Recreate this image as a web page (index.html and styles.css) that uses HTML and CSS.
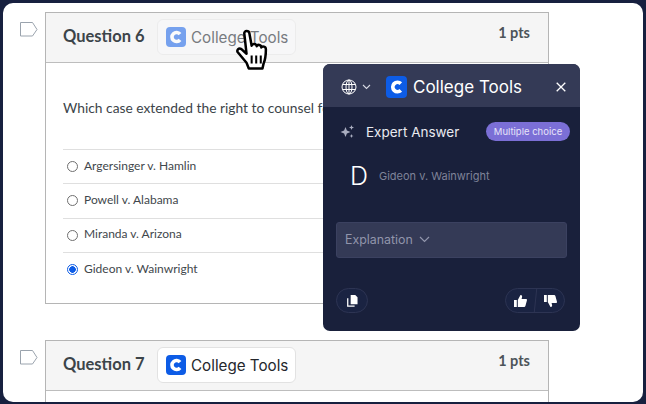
FILE: index.html
```html
<!DOCTYPE html>
<html lang="en">
<head>
<meta charset="utf-8">
<title>College Tools</title>
<link rel="stylesheet" href="styles.css">
</head>
<body>
<div class="window">
  <div class="question">
    <svg class="flag" width="18" height="15" viewBox="0 0 18 15"><path d="M.5.5h12l4.500 7-4.500 6.500H.5z" fill="#fff" stroke="#9aa3ad"/></svg>
    <section class="card card-open">
      <header class="card-head">
        <h2 class="q-title">Question 6</h2>
        <div class="tool-btn tool-btn-faded">
          <svg class="logo-sm" width="20" height="20" viewBox="0 0 20 20"><rect width="20" height="20" rx="4" fill="#0d5ce6"/><path d="M14 7.200A4.500 4.500 0 1 0 14 12.800" fill="none" stroke="#fff" stroke-width="3.600"/></svg>
          <span>College Tools</span>
        </div>
        <span class="pts">1 pts</span>
      </header>
      <div class="card-body">
        <p class="q-text">Which case extended the right to counsel for felony defendants in state courts?</p>
        <ul class="answers">
          <li class="answer"><span class="radio"></span>Argersinger v. Hamlin</li>
          <li class="answer"><span class="radio"></span>Powell v. Alabama</li>
          <li class="answer"><span class="radio"></span>Miranda v. Arizona</li>
          <li class="answer"><span class="radio radio-on"></span>Gideon v. Wainwright</li>
        </ul>
      </div>
    </section>
  </div>
  <div class="question">
    <svg class="flag" width="18" height="15" viewBox="0 0 18 15"><path d="M.5.5h12l4.500 7-4.500 6.500H.5z" fill="#fff" stroke="#9aa3ad"/></svg>
    <section class="card card-cut">
      <header class="card-head">
        <h2 class="q-title">Question 7</h2>
        <div class="tool-btn">
          <svg class="logo-sm" width="20" height="20" viewBox="0 0 20 20"><rect width="20" height="20" rx="4" fill="#0d5ce6"/><path d="M14 7.200A4.500 4.500 0 1 0 14 12.800" fill="none" stroke="#fff" stroke-width="3.600"/></svg>
          <span>College Tools</span>
        </div>
        <span class="pts">1 pts</span>
      </header>
    </section>
  </div>

  <svg class="cursor" width="41" height="48" viewBox="0 0 36 42">
    <path d="M9 4.500c0-2.500 4-2.500 4.500 0l2 11c.5-2 4-2 4.500.5.500-2 4-1.500 4 1 .8-1.500 4-1 4 1.500 0 5-.5 9-2 12.500l-1 4.500H13l-2-5-7.500-9c-1.500-2 .5-4.500 3-3l4.500 4z" fill="#fff" stroke="#000" stroke-width="2.200" stroke-linejoin="round"/>
    <path d="M15.500 24v7M19.500 24v7M23.500 24v7" stroke="#000" stroke-width="1.800"/>
  </svg>

  <aside class="popup">
    <div class="pop-head">
      <svg class="globe" width="16" height="16" viewBox="0 0 16 16" fill="none" stroke="#fff" stroke-width="1"><circle cx="8" cy="8" r="7"/><ellipse cx="8" cy="8" rx="3" ry="7"/><path d="M1.500 5.500h13M1.500 10.500h13M8 1v14"/></svg>
      <svg class="chev-sm" width="9" height="6" viewBox="0 0 9 6" fill="none" stroke="#d5d7e2" stroke-width="1.100"><path d="M1 1l3.500 3.500L8 1"/></svg>
      <svg class="logo-lg" width="21" height="22" viewBox="0 0 21 22"><rect width="21" height="22" rx="4" fill="#0d5ce6"/><path d="M14.800 7.600A4.700 4.700 0 1 0 14.800 14.400" fill="none" stroke="#fff" stroke-width="3.800"/></svg>
      <span class="pop-title">College Tools</span>
      <svg class="close" width="10" height="10" viewBox="0 0 10 10" stroke="#fff" stroke-width="1.300"><path d="M.7.700l8.600 8.600M9.300.700L.7 9.300"/></svg>
    </div>
    <div class="pop-body">
      <div class="expert-row">
        <svg class="spark" width="15" height="15" viewBox="0 0 15 15" fill="#a9adc0"><path d="M5.500 3l1.400 3.600L10.500 8 6.900 9.400 5.500 13 4.100 9.400.5 8l3.600-1.400zM11.500 1l.7 1.800 1.800.7-1.800.7-.7 1.800-.7-1.800-1.800-.7 1.800-.7zM11.500 10l.6 1.400 1.400.6-1.400.6-.6 1.400-.6-1.400-1.400-.6 1.400-.6z"/></svg>
        <span class="expert">Expert Answer</span>
        <span class="pill">Multiple choice</span>
      </div>
      <div class="result">
        <span class="letter">D</span>
        <span class="result-text">Gideon v. Wainwright</span>
      </div>
      <div class="explain">
        <span>Explanation</span>
        <svg width="11" height="7" viewBox="0 0 11 7" fill="none" stroke="#9195ab" stroke-width="1.200"><path d="M1 1l4.500 4.500L10 1"/></svg>
      </div>
      <div class="pop-foot">
        <div class="round-btn">
          <svg width="11" height="12" viewBox="0 0 12 13"><path d="M4 0h5l2.500 2.500V10H4z" fill="#fff"/><path d="M.8 3.500v8.700h7.500" fill="none" stroke="#fff" stroke-width="1.400"/></svg>
        </div>
        <div class="vote">
          <svg width="13" height="12" viewBox="0 0 13 12" fill="#fff"><path d="M0 5h2.800v7H0zM3.800 5l2.700-5c1.300 0 1.900 1 1.500 2.300L7.600 4H12c.8 0 1.100.7.900 1.400l-1.500 5.500c-.2.700-.6 1.100-1.300 1.100H3.800z"/></svg>
          <span class="vote-sep"></span>
          <svg width="13" height="12" viewBox="0 0 13 12" fill="#fff"><path d="M0 0h2.800v7H0zM3.800 7l2.700 5c1.300 0 1.900-1 1.500-2.300L7.600 8H12c.8 0 1.100-.7.900-1.400L11.400 1.100C11.200.4 10.800 0 10.100 0H3.800z"/></svg>
        </div>
      </div>
    </div>
  </aside>
</div>
</body>
</html>
```
FILE: styles.css
```css
* { box-sizing: border-box; }
html, body { margin: 0; padding: 0; }
body {
  width: 646px;
  height: 404px;
  background: #17203f;
  padding: 3px 3px 2px;
  overflow: hidden;
  font-family: "Lato", "Liberation Sans", sans-serif;
}
.window {
  position: relative;
  height: 399px;
  background: #fff;
  border-radius: 10px;
  overflow: hidden;
  padding-top: 9px;
  display: flex;
  flex-direction: column;
  gap: 36px;
}
.question {
  display: flex;
  align-items: flex-start;
  padding-left: 17px;
  flex: none;
}
.flag { margin-top: 10px; margin-right: 7px; flex: none; }
.card {
  width: 504px;
  border: 1px solid #b5b5b5;
  background: #fff;
  flex: none;
}
.card-open { height: 292px; }
.card-cut { height: 100px; }
.card-head {
  height: 50px;
  background: #f5f5f5;
  border-bottom: 1px solid #bdbdbd;
  display: flex;
  align-items: center;
  padding: 0 18px 0 17px;
}
.q-title {
  margin: 0;
  font-size: 16.500px;
  font-weight: 700;
  color: #3c4449;
  width: 94px;
  flex: none;
  position: relative;
  top: -2px;
}
.tool-btn {
  width: 139px;
  height: 36px;
  background: #fff;
  border: 1px solid #e2e2e2;
  border-radius: 6px;
  display: flex;
  align-items: center;
  gap: 5px;
  padding-left: 8px;
  font-family: "Inter", "Noto Sans", sans-serif;
  font-size: 15.200px;
  color: #24272c;
  white-space: nowrap;
  margin-top: -1px;
}
.tool-btn-faded { background: #f7f7f8; border-color: #ececec; color: #777b80; }
.tool-btn-faded .logo-sm { opacity: .55; }
.logo-sm { flex: none; }
.pts {
  margin-left: auto;
  font-size: 14.500px;
  font-weight: 700;
  color: #4d5459;
  position: relative;
  top: -5px;
}
.card-body { padding: 0 17px; }
.q-text {
  margin: 35px 0 0;
  font-size: 13.800px;
  line-height: 20px;
  color: #3c4449;
  white-space: nowrap;
}
.answers {
  list-style: none;
  margin: 31px 0 0;
  padding: 0;
}
.answer {
  height: 34.300px;
  border-top: 1px solid #dfdfdf;
  display: flex;
  align-items: center;
  gap: 6px;
  padding: 0 0 3px 4px;
  font-size: 12px;
  color: #3f474c;
}
.radio {
  width: 11px;
  height: 11px;
  border: 1px solid #6f6f6f;
  border-radius: 50%;
  background: #fff;
  flex: none;
  margin-top: 3px;
}
.radio-on {
  border-color: #0d5ce6;
  background: radial-gradient(circle, #0d5ce6 0 3px, #fff 3.600px);
}
.cursor { position: absolute; left: 231px; top: 25px; }
.popup {
  position: absolute;
  left: 320px;
  top: 61px;
  width: 257px;
  height: 267px;
  background: #19203b;
  border-radius: 7px;
  overflow: hidden;
  display: flex;
  flex-direction: column;
  font-family: "Inter", "Noto Sans", sans-serif;
}
.pop-head {
  height: 43px;
  background: #343a56;
  display: flex;
  align-items: center;
  padding: 3px 14px 0 18px;
  flex: none;
}
.chev-sm { margin-left: 5px; }
.logo-lg { margin-left: 15px; }
.pop-title {
  margin-left: 6px;
  font-size: 17px;
  color: #fff;
  white-space: nowrap;
}
.close { margin-left: auto; }
.pop-body {
  flex: 1;
  display: flex;
  flex-direction: column;
  padding: 15px 13px 18px;
}
.expert-row {
  display: flex;
  align-items: center;
  height: 19px;
  padding-left: 4px;
}
.expert { margin-left: 11px; font-size: 13.500px; color: #e9eaf0; white-space: nowrap; }
.pill {
  margin-left: auto;
  width: 84px;
  height: 19px;
  border-radius: 10px;
  background: #7b6fd6;
  color: #e6e3f8;
  font-size: 9.500px;
  display: flex;
  align-items: center;
  justify-content: center;
  margin-right: -3px;
  white-space: nowrap;
}
.result {
  display: flex;
  align-items: center;
  margin-top: 20px;
  padding-left: 14px;
  height: 30px;
}
.letter { font-size: 25px; font-weight: 300; color: #fff; width: 29px; }
.result-text { font-size: 11px; color: #7f8399; white-space: nowrap; }
.explain {
  margin-top: 31px;
  height: 36px;
  background: #343a56;
  border: 1px solid #3b4160;
  border-radius: 3px;
  display: flex;
  align-items: center;
  gap: 6px;
  padding: 0 0 2px 8px;
  font-size: 12.400px;
  color: #9195ab;
}
.pop-foot {
  margin-top: auto;
  display: flex;
  justify-content: space-between;
  padding-right: 2px;
}
.round-btn, .vote {
  height: 25px;
  border: 1px solid #2d3453;
  border-radius: 13px;
  background: #1a2342;
  display: flex;
  align-items: center;
  justify-content: center;
}
.round-btn { width: 32px; }
.vote { width: 60px; gap: 8px; }
.vote-sep { width: 1px; height: 23px; background: #2d3453; transform: rotate(6deg); }
```
